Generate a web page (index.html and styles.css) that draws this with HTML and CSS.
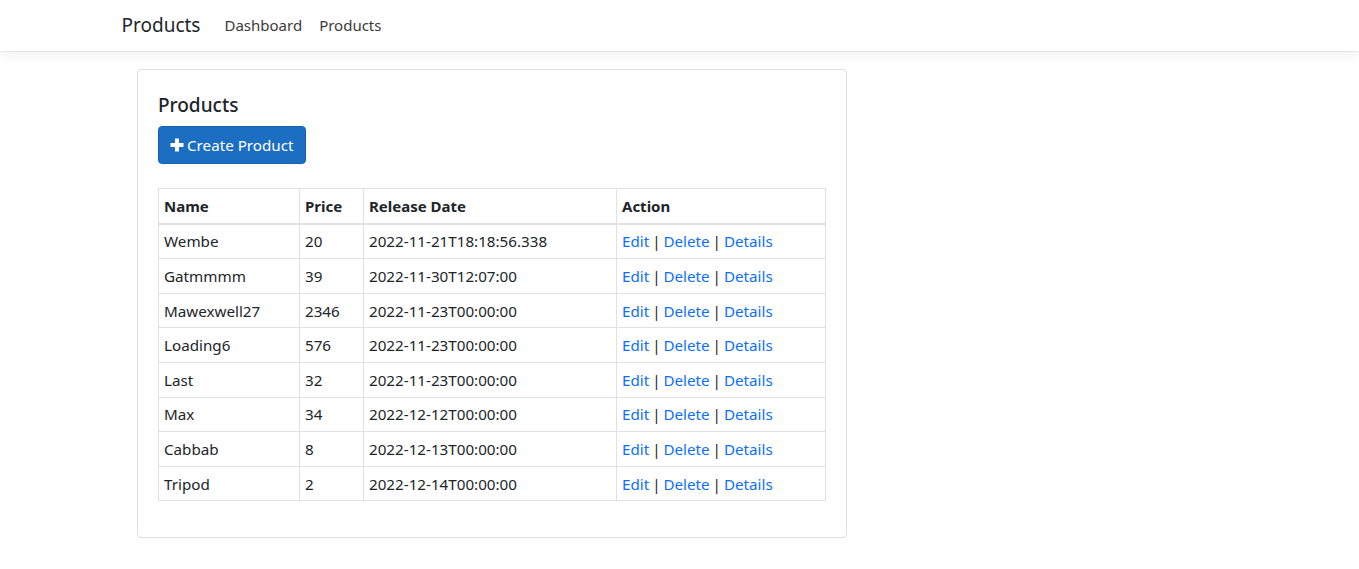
FILE: index.html
```html
<!DOCTYPE html>
<html lang="en">
<head>
<meta charset="utf-8">
<title>Products</title>
<link rel="stylesheet" href="styles.css">
</head>
<body>
<header class="navbar">
  <div class="nav-inner">
    <a class="brand" href="#">Products</a>
    <nav class="nav-links">
      <a href="#">Dashboard</a>
      <a href="#">Products</a>
    </nav>
  </div>
</header>
<main class="main">
  <section class="card">
    <h2 class="card-title">Products</h2>
    <a class="btn-primary" href="#"><svg class="plus" viewBox="0 0 14 14" width="14" height="14"><path d="M5 0.5h4v4.5h4.5v4H9v4.5H5V9H0.5V5H5z" fill="#fff"/></svg>Create Product</a>
    <table class="table">
      <thead>
        <tr><th class="c-name">Name</th><th class="c-price">Price</th><th class="c-date">Release Date</th><th>Action</th></tr>
      </thead>
      <tbody>
        <tr><td>Wembe</td><td>20</td><td>2022-11-21T18:18:56.338</td><td class="actions"><a href="#">Edit</a> | <a href="#">Delete</a> | <a href="#">Details</a></td></tr>
        <tr><td>Gatmmmm</td><td>39</td><td>2022-11-30T12:07:00</td><td class="actions"><a href="#">Edit</a> | <a href="#">Delete</a> | <a href="#">Details</a></td></tr>
        <tr><td>Mawexwell27</td><td>2346</td><td>2022-11-23T00:00:00</td><td class="actions"><a href="#">Edit</a> | <a href="#">Delete</a> | <a href="#">Details</a></td></tr>
        <tr><td>Loading6</td><td>576</td><td>2022-11-23T00:00:00</td><td class="actions"><a href="#">Edit</a> | <a href="#">Delete</a> | <a href="#">Details</a></td></tr>
        <tr><td>Last</td><td>32</td><td>2022-11-23T00:00:00</td><td class="actions"><a href="#">Edit</a> | <a href="#">Delete</a> | <a href="#">Details</a></td></tr>
        <tr><td>Max</td><td>34</td><td>2022-12-12T00:00:00</td><td class="actions"><a href="#">Edit</a> | <a href="#">Delete</a> | <a href="#">Details</a></td></tr>
        <tr><td>Cabbab</td><td>8</td><td>2022-12-13T00:00:00</td><td class="actions"><a href="#">Edit</a> | <a href="#">Delete</a> | <a href="#">Details</a></td></tr>
        <tr><td>Tripod</td><td>2</td><td>2022-12-14T00:00:00</td><td class="actions"><a href="#">Edit</a> | <a href="#">Delete</a> | <a href="#">Details</a></td></tr>
      </tbody>
    </table>
  </section>
</main>
</body>
</html>
```
FILE: styles.css
```css
* { box-sizing: border-box; }
body {
  margin: 0;
  font-family: "Noto Sans", "Open Sans", sans-serif;
  font-size: 15.2px;
  line-height: 24px;
  color: #212529;
  background: #fff;
}
a { text-decoration: none; }
.navbar {
  height: 52px;
  background: #fff;
  border-bottom: 1px solid #e5e5e5;
  box-shadow: 0 4px 12px rgba(0,0,0,0.05);
}
.nav-inner {
  width: 1116px;
  margin: 0 auto;
  height: 100%;
  display: flex;
  align-items: center;
}
.brand {
  font-size: 19px;
  color: #212529;
  margin-right: 24px;
  padding-bottom: 2px;
}
.nav-links { display: flex; gap: 17px; }
.nav-links a {
  font-size: 15px;
  color: #3a3a3a;
  padding-bottom: 2px;
}
.main { padding: 17px 0 0 137px; }
.card {
  width: 710px;
  border: 1px solid #dfdfdf;
  border-radius: 4px;
  padding: 20px 20px 36px 20px;
}
.card-title {
  margin: 0 0 6px 0;
  font-size: 19px;
  font-weight: 500;
  line-height: 30px;
}
.btn-primary {
  display: inline-flex;
  align-items: center;
  gap: 3px;
  height: 38px;
  padding: 0 11px;
  background: #1b6ec2;
  border: 1px solid #1861ac;
  border-radius: 4px;
  color: #fff;
  font-size: 15.2px;
}
.plus { display: block; }
.table {
  margin-top: 24px;
  width: 668px;
  border-collapse: collapse;
}
.table th, .table td {
  border: 1px solid #dee2e6;
  padding: 4.8px 5px;
  text-align: left;
  vertical-align: top;
}
.table th { font-weight: 700; font-size: 15px; }
.table thead th { border-bottom: 2px solid #dee2e6; }
.c-name { width: 141px; }
.c-price { width: 64px; }
.c-date { width: 253px; }
.actions { word-spacing: -1px; }
.table td a { color: #0d6efd; }
```
